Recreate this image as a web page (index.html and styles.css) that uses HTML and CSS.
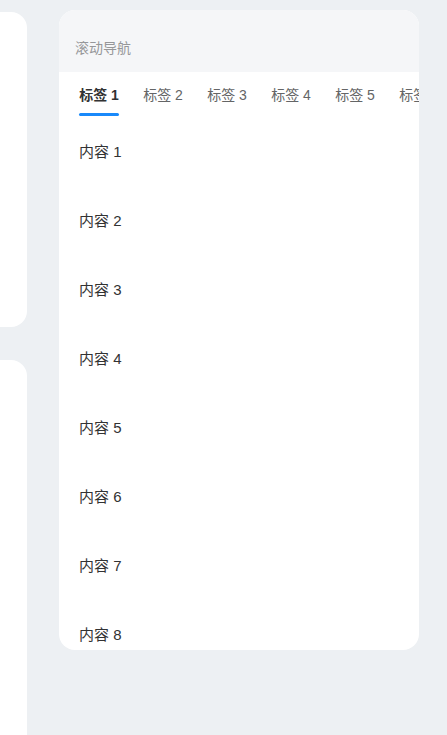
FILE: index.html
```html
<!DOCTYPE html>
<html lang="zh-CN">
<head>
<meta charset="utf-8">
<title>滚动导航</title>
<link rel="stylesheet" href="styles.css">
</head>
<body>
<div class="page">
  <div class="col col-left">
    <div class="card card-a"></div>
    <div class="card card-b"></div>
  </div>
  <div class="col col-main">
    <div class="card demo">
      <div class="demo-title">滚动导航</div>
      <div class="tabs">
        <div class="tab-nav">
          <div class="tab active"><span class="tab-label">标签 1</span><span class="tab-line"></span></div>
          <div class="tab"><span class="tab-label">标签 2</span><span class="tab-line"></span></div>
          <div class="tab"><span class="tab-label">标签 3</span><span class="tab-line"></span></div>
          <div class="tab"><span class="tab-label">标签 4</span><span class="tab-line"></span></div>
          <div class="tab"><span class="tab-label">标签 5</span><span class="tab-line"></span></div>
          <div class="tab"><span class="tab-label">标签 6</span><span class="tab-line"></span></div>
        </div>
      </div>
      <div class="panes">
        <div class="pane">内容 1</div>
        <div class="pane">内容 2</div>
        <div class="pane">内容 3</div>
        <div class="pane">内容 4</div>
        <div class="pane">内容 5</div>
        <div class="pane">内容 6</div>
        <div class="pane">内容 7</div>
        <div class="pane">内容 8</div>
      </div>
    </div>
  </div>
</div>
</body>
</html>
```

FILE: styles.css
```css
html {
  background: #edf0f3;
}
body {
  margin: 0;
  font-family: "Liberation Sans", "Noto Sans CJK SC", sans-serif;
  color: #323233;
}
.page {
  display: flex;
  gap: 32px;
  align-items: flex-start;
  height: 735px;
  overflow: hidden;
}
.col {
  flex: 0 0 360px;
  width: 360px;
  display: flex;
  flex-direction: column;
}
.col-left {
  margin-left: -333px;
  padding-top: 12px;
}
.col-main {
  padding-top: 10px;
}
.card {
  background: #fff;
  border-radius: 16px;
  overflow: hidden;
}
.card-a {
  height: 315px;
}
.card-b {
  margin-top: 33px;
  height: 500px;
}
.demo {
  height: 640px;
  display: flex;
  flex-direction: column;
}
.demo-title {
  background: #f5f6f8;
  padding: 30px 16px 16px;
  font-size: 14px;
  line-height: 16px;
  color: #969799;
}
.tabs {
  height: 44px;
  flex: none;
  overflow: hidden;
  background: #fff;
}
.tab-nav {
  display: flex;
  height: 44px;
  padding-left: 8px;
  white-space: nowrap;
}
.tab {
  flex: none;
  display: flex;
  flex-direction: column;
  align-items: center;
  height: 44px;
  padding: 0 12px;
  color: #646566;
  font-size: 14px;
}
.tab-label {
  height: 44px;
  flex: none;
  display: flex;
  align-items: center;
  line-height: 20px;
  padding-top: 1px;
  box-sizing: border-box;
}
.tab-line {
  width: 40px;
  height: 3px;
  margin-top: -3px;
  border-radius: 3px;
  background: transparent;
}
.tab.active {
  color: #323233;
  font-weight: bold;
}
.tab.active .tab-line {
  background: #1989fa;
}
.panes {
  flex: 1;
  overflow: hidden;
}
.pane {
  padding: 25px 20px 23px;
  font-size: 15px;
  line-height: 21px;
  color: #323233;
}
```
